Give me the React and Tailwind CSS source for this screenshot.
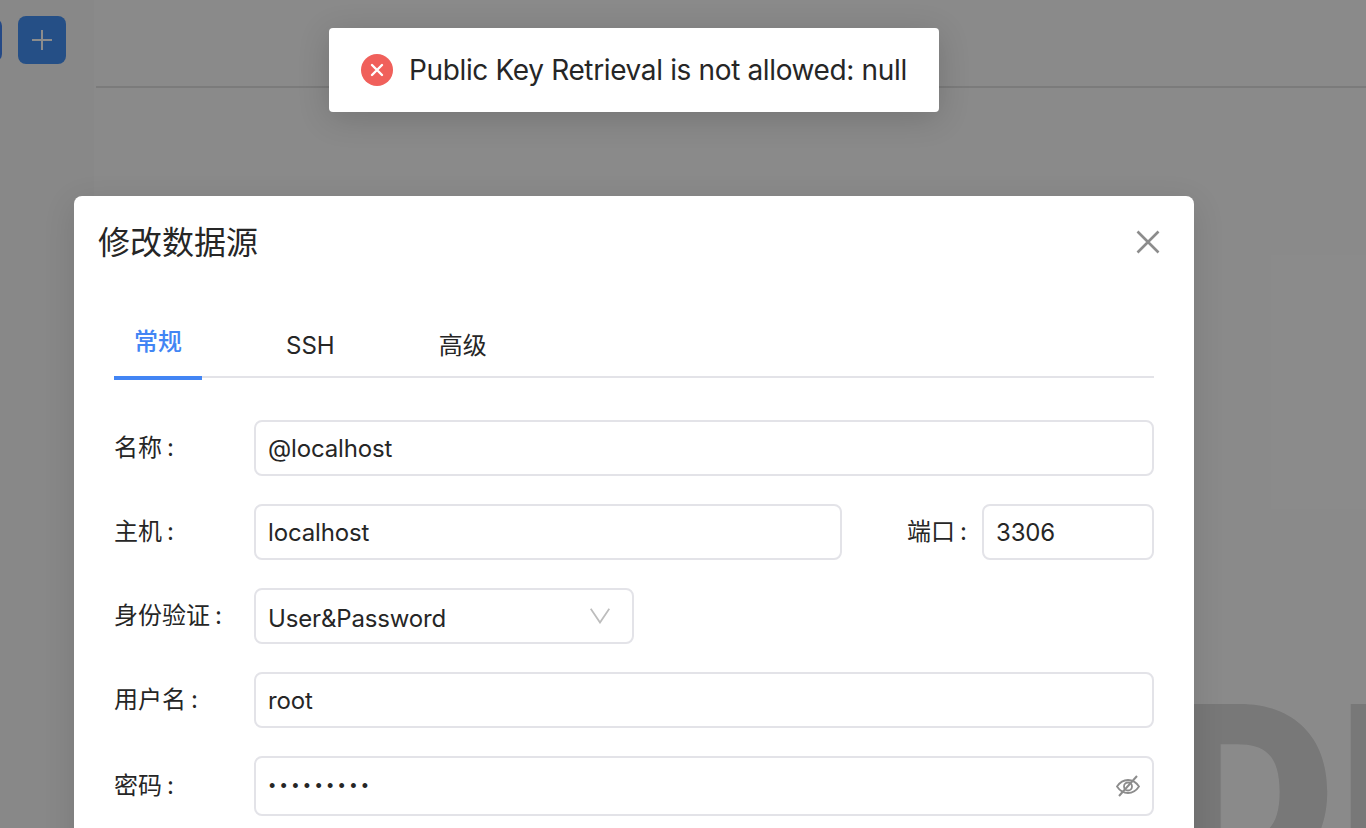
import React from 'react';

const FONT = "font-[Inter,'Noto_Sans_CJK_SC',sans-serif]";

const Label = ({ text, className = 'w-[140px]' }) => (
  <label className={`${className} shrink-0 text-[24px] leading-[32px] text-[#262626]`}>
    {text}<span className="ml-[5px]">:</span>
  </label>
);

const Field = ({ label, children, className = 'h-[56px]' }) => (
  <div className={`flex items-center ${className}`}>
    <Label text={label} />
    {children}
  </div>
);

const TextInput = ({ value, type = 'text', className = 'flex-1 h-[56px]', textClass = 'text-[24px] tracking-[-0.15px] pl-[12px]' }) => (
  <input
    readOnly
    type={type}
    value={value}
    className={`${className} ${textClass} min-w-0 rounded-[8px] border-2 border-[#e3e3e8] pr-[12px] text-[#262626] outline-none`}
  />
);

const EyeOffIcon = () => (
  <svg width="26" height="24" viewBox="0 0 26 24" fill="none" stroke="#8c8c8c" strokeWidth="1.8" className="absolute right-[13px] top-[18px]">
    <path d="M2 12.5C5 8 8.5 6 13 6s8 2 11 6.5C21 17 17.5 19 13 19S5 17 2 12.5Z" />
    <circle cx="13" cy="12.5" r="4" />
    <path d="M22 2 4 22" strokeWidth="2" />
  </svg>
);

export default function App() {
  return (
    <div className={`relative h-screen overflow-hidden bg-[#fcfcfc] ${FONT}`}>
      {/* page behind the dialog */}
      <div className="flex h-full">
        <aside className="w-[94px] shrink-0 bg-[#f8f8f8] flex items-start pt-[16px] gap-[16px]">
          <div className="w-[44px] h-[44px] -ml-[42px] mt-[2px] rounded-[8px] bg-[#4285f4] shrink-0"></div>
          <button className="w-[48px] h-[48px] rounded-[8px] bg-[#4491f5] flex items-center justify-center shrink-0">
            <svg width="22" height="22" viewBox="0 0 22 22" stroke="#fff" strokeWidth="2">
              <path d="M11 1v20M1 11h20" />
            </svg>
          </button>
        </aside>
        <main className="relative flex-1 overflow-hidden pl-[2px]">
          <div className="h-[88px] border-b-2 border-[#e0e0e0]"></div>
          <div className="absolute left-[1068px] top-[672px] text-[240px] leading-[240px] font-black tracking-[4px] text-[#dadada] whitespace-nowrap">DB</div>
        </main>
      </div>

      {/* backdrop */}
      <div className="absolute inset-0 bg-black/45"></div>

      {/* dialog */}
      <div className="absolute left-[74px] top-[196px] w-[1120px] rounded-[8px] bg-white shadow-[0_8px_32px_rgba(0,0,0,0.12)]">
        <div className="flex items-center justify-between h-[92px] pl-[24px] pr-[34px]">
          <h2 className="text-[32px] leading-[44px] text-[#262626] pt-[2px]">修改数据源</h2>
          <svg width="24" height="24" viewBox="0 0 24 24" stroke="#8c8c8c" strokeWidth="2.6">
            <path d="M1.5 1.5l21 21M22.5 1.5l-21 21" />
          </svg>
        </div>

        <div className="px-[40px] pt-[28px]">
          <div className="flex h-[62px] border-b-2 border-[#e3e3e8] text-[24px] text-[#262626]">
            <div className="relative w-[88px] h-[62px] flex justify-center pt-[8px] text-[#4285f4] font-medium">
              常规
              <div className="absolute left-0 right-0 bottom-[-2px] h-[4px] bg-[#4285f4]"></div>
            </div>
            <div className="ml-[84px] pt-[12px]">SSH</div>
            <div className="ml-[104px] pt-[12px]">高级</div>
          </div>

          <div className="flex flex-col gap-[28px] pt-[42px]">
            <Field label="名称">
              <TextInput value="@localhost" />
            </Field>
            <Field label="主机">
              <TextInput value="localhost" />
              <Label text="端口" className="ml-[65px] w-[75px]" />
              <TextInput value="3306" className="w-[172px] shrink-0 h-[56px]" />
            </Field>
            <Field label="身份验证">
              <div className="relative w-[380px] h-[56px] rounded-[8px] border-2 border-[#e3e3e8] px-[12px] pt-[6px] flex items-center text-[24px] tracking-[-0.15px] text-[#262626]">
                User&amp;Password
                <svg width="20" height="16" viewBox="0 0 20 16" fill="none" stroke="#bdbdbd" strokeWidth="1.8" className="absolute right-[22px] top-[18px]">
                  <path d="M.7 .7 10 14.5 19.3 .7" />
                </svg>
              </div>
            </Field>
            <Field label="用户名">
              <TextInput value="root" />
            </Field>
            <Field label="密码" className="h-[60px]">
              <div className="relative flex-1 h-[60px]">
                <TextInput
                  value="123456789"
                  type="password"
                  className="w-full h-[60px] font-['Liberation_Sans',sans-serif]"
                  textClass="text-[18px] tracking-[5.3px] pl-[13px]"
                />
                <EyeOffIcon />
              </div>
            </Field>
          </div>
        </div>
        <div className="h-[60px]"></div>
      </div>

      {/* toast */}
      <div className="absolute left-[329px] top-[28px] w-[610px] h-[84px] rounded-[4px] bg-white shadow-[0_6px_32px_rgba(0,0,0,0.16)] flex items-center pl-[32px]">
        <svg width="32" height="32" viewBox="0 0 32 32" className="shrink-0">
          <circle cx="16" cy="16" r="16" fill="#f0605b" />
          <path d="M11 11l10 10M21 11L11 21" stroke="#fff" strokeWidth="2.4" strokeLinecap="round" />
        </svg>
        <span className="ml-[16px] text-[28px] leading-[40px] tracking-[-0.36px] text-[#262626] whitespace-nowrap">Public Key Retrieval is not allowed: null</span>
      </div>
    </div>
  );
}
